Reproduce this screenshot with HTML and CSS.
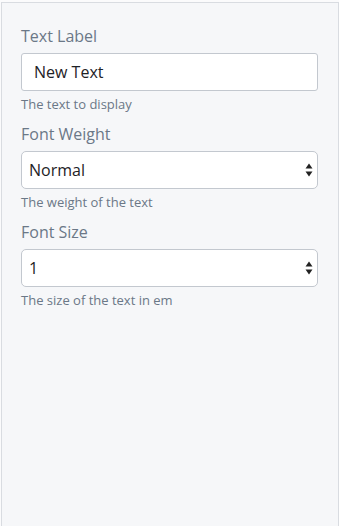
FILE: index.html
```html
<!DOCTYPE html>
<html lang="en">
<head>
<meta charset="utf-8">
<title>Text properties</title>
<link rel="stylesheet" href="styles.css">
</head>
<body>
<div class="panel">
  <div class="field">
    <label class="label" for="t">Text Label</label>
    <input id="t" class="input" type="text" value="New Text">
    <div class="help">The text to display</div>
  </div>
  <div class="field">
    <label class="label" for="w">Font Weight</label>
    <div class="select-wrap">
      <select id="w" class="select">
        <option>Normal</option>
        <option>Bold</option>
      </select>
      <svg class="caret" width="8" height="14" viewBox="0 0 8 14"><path d="M4 0.5L7.5 5.5H0.5Z" fill="#222"/><path d="M4 13.5L7.5 8.5H0.5Z" fill="#222"/></svg>
    </div>
    <div class="help">The weight of the text</div>
  </div>
  <div class="field">
    <label class="label" for="s">Font Size</label>
    <div class="select-wrap">
      <select id="s" class="select">
        <option>1</option>
        <option>2</option>
      </select>
      <svg class="caret" width="8" height="14" viewBox="0 0 8 14"><path d="M4 0.5L7.5 5.5H0.5Z" fill="#222"/><path d="M4 13.5L7.5 8.5H0.5Z" fill="#222"/></svg>
    </div>
    <div class="help">The size of the text in em</div>
  </div>
</div>
</body>
</html>
```
FILE: styles.css
```css
html, body {
  margin: 0;
  padding: 0;
  height: 100%;
  background: #fbfbfc;
  font-family: "Open Sans", "Noto Sans", sans-serif;
}
.panel {
  box-sizing: border-box;
  margin: 2px 0 0 1px;
  width: 338px;
  height: 524px;
  background: #f6f7f9;
  border: 1px solid #d9dce1;
  border-bottom: none;
  padding: 21px 19px 0 19px;
  display: flex;
  flex-direction: column;
  gap: 8px;
}
.field {
  display: flex;
  flex-direction: column;
}
.label {
  font-size: 16px;
  line-height: 24px;
  color: #6b7887;
  margin-bottom: 5px;
}
.input, .select {
  box-sizing: border-box;
  width: 297px;
  height: 38px;
  margin: 0;
  background: #fff;
  border: 1px solid #c3c8cf;
  font-family: "Open Sans", "Noto Sans", sans-serif;
  font-size: 16px;
  color: #1e2226;
  outline: none;
}
.input {
  border-radius: 3px;
  padding: 0 12px;
}
.select-wrap {
  position: relative;
  width: 297px;
}
.select {
  -webkit-appearance: none;
  appearance: none;
  border-radius: 5px;
  padding: 0 24px 0 7px;
}
.caret {
  position: absolute;
  right: 5px;
  top: 12px;
  pointer-events: none;
}
.help {
  margin-top: 3px;
  font-size: 13px;
  line-height: 20px;
  color: #6b7887;
}
```
